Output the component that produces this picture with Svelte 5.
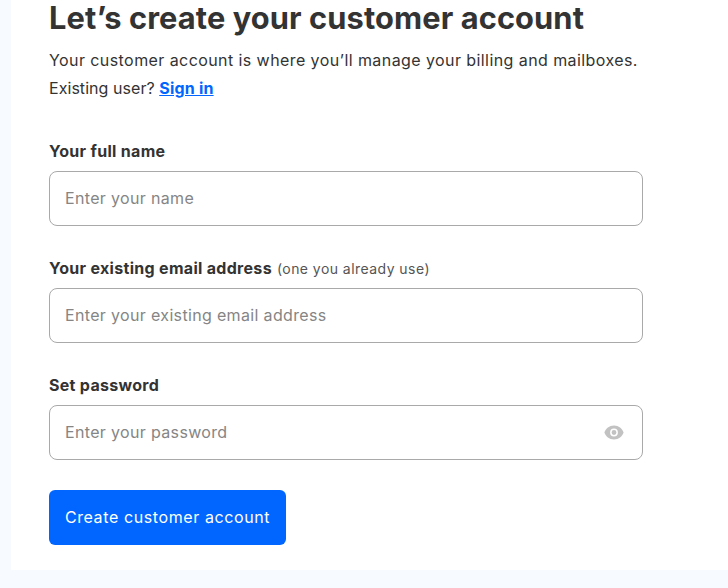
<script>
  let fields = [
    { label: 'Your full name', placeholder: 'Enter your name' },
    { label: 'Your existing email address', hint: '(one you already use)', placeholder: 'Enter your existing email address' },
    { label: 'Set password', placeholder: 'Enter your password', eye: true }
  ];
</script>

<div class="page">
  <main class="card">
    <h1>Let’s create your customer account</h1>
    <p class="intro">Your customer account is where you’ll manage your billing and mailboxes.</p>
    <p class="intro second">Existing user? <a href="#signin">Sign in</a></p>

    <form class="form" onsubmit={(e) => e.preventDefault()}>
      {#each fields as f}
        <div class="field">
          <div class="label"><b>{f.label}</b>{#if f.hint}<span class="hint">{f.hint}</span>{/if}</div>
          <div class="input">
            <span class="placeholder">{f.placeholder}</span>
            {#if f.eye}
              <svg class="eye" width="20" height="15" viewBox="0 0 20 15" aria-hidden="true">
                <path fill-rule="evenodd" fill="#c2c2c2" d="M10 .5C5.200.5 1.800 3.400.4 7.500 1.800 11.600 5.200 14.500 10 14.500s8.200-2.900 9.600-7C18.200 3.400 14.800.5 10 .5zM10 11.400a3.900 3.900 0 1 1 0-7.800 3.900 3.900 0 0 1 0 7.800zM10 5.100a2.400 2.400 0 1 0 0 4.800 2.400 2.400 0 0 0 0-4.800z"/>
              </svg>
            {/if}
          </div>
        </div>
      {/each}
      <button class="submit" type="submit"><span>Create customer account</span></button>
    </form>
  </main>
</div>

<style>
  :global(body) {
    margin: 0;
    background: #f7fbff;
  }
  .page {
    height: 588px;
    padding-left: 11px;
    overflow: hidden;
    font-family: Inter, "Noto Sans", sans-serif;
    color: #333;
  }
  .card {
    height: 570px;
    box-sizing: border-box;
    background: #fff;
    padding-left: 38px;
  }
  h1 {
    margin: 0 0 10px;
    font-size: 30.800px;
    line-height: 36px;
    font-weight: 700;
    letter-spacing: 0.1px;
    color: #333;
  }
  .intro {
    margin: 0;
    font-size: 16px;
    line-height: 28px;
    letter-spacing: 0.42px;
    color: #333;
  }
  .second {
    letter-spacing: 0.05px;
  }
  .intro a {
    color: #0066ff;
    font-weight: 700;
    letter-spacing: 0.2px;
    text-decoration: underline;
  }
  .form {
    width: 594px;
    margin-top: 37px;
    display: flex;
    flex-direction: column;
    gap: 30px;
  }
  .label {
    font-size: 16px;
    line-height: 24px;
    margin-bottom: 8px;
    height: 24px;
    letter-spacing: 0.3px;
  }
  .label b {
    font-weight: 700;
  }
  .hint {
    margin-left: 5px;
    font-size: 14px;
    letter-spacing: 0.45px;
    color: #555;
  }
  .input {
    height: 55px;
    box-sizing: border-box;
    border: 1px solid #a9a9a9;
    border-radius: 8px;
    padding: 0 18px 0 15px;
    display: flex;
    align-items: center;
    justify-content: space-between;
    font-size: 16px;
    letter-spacing: 0.34px;
  }
  .placeholder {
    margin-bottom: 2px;
    color: #858585;
  }
  .eye {
    display: block;
  }
  .submit {
    width: 237px;
    height: 55px;
    border: none;
    border-radius: 6px;
    background: #0066ff;
    color: #fff;
    font-family: inherit;
    font-size: 16px;
    font-weight: 400;
    letter-spacing: 0.6px;
    padding: 0 0 2px;
  }
</style>
